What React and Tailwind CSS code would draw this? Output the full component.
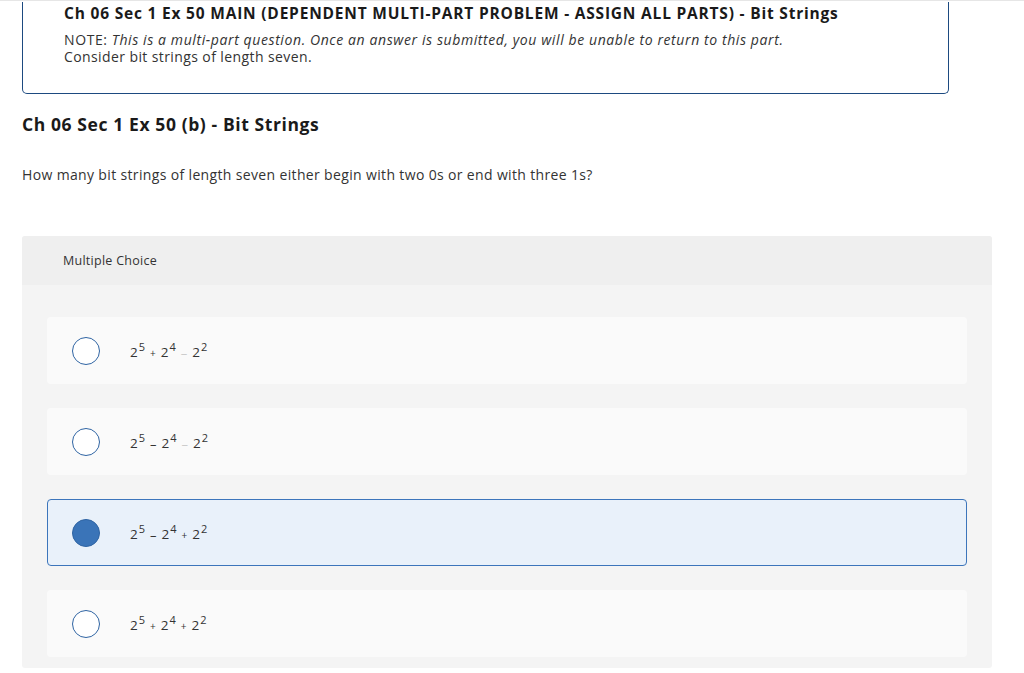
import React from "react";

const font = { fontFamily: "'Open Sans', Arial, sans-serif" };

function Term({ base = "2", exp }) {
  return (
    <span>
      {base}
      <sup className="text-[11px] top-[-6px] ml-[1px]">{exp}</sup>
    </span>
  );
}

function Op({ children, faint }) {
  const dash = children === "–";
  return (
    <span
      className={`mx-[5px] ${dash ? "text-[13px] relative top-[1px]" : "text-[10px]"} ${
        faint ? "text-[#cccccc]" : "text-[#333]"
      }`}
    >
      {children}
    </span>
  );
}

const options = [
  { parts: [["5"], ["+", false], ["4"], ["–", true], ["2"]], selected: false },
  { parts: [["5"], ["–", false], ["4"], ["–", true], ["2"]], selected: false },
  { parts: [["5"], ["–", false], ["4"], ["+", false], ["2"]], selected: true },
  { parts: [["5"], ["+", false], ["4"], ["+", false], ["2"]], selected: false },
];

function Option({ opt }) {
  return (
    <div
      className={`h-[67px] rounded-[4px] flex items-center pl-[24px] ${
        opt.selected ? "bg-[#e9f1fa] border border-[#3c75bb]" : "bg-[#fafafa] border border-transparent"
      }`}
    >
      <div
        className={`w-[28px] h-[28px] rounded-full border border-[#2f64a3] ${
          opt.selected ? "bg-[#3a74b8]" : "bg-white"
        }`}
      />
      <div className="ml-[30px] text-[13.5px] text-[#333] mt-[3px]">
        {opt.parts.map((p, i) =>
          i % 2 === 0 ? <Term key={i} exp={p[0]} /> : <Op key={i} faint={p[1]}>{p[0]}</Op>
        )}
      </div>
    </div>
  );
}

export default function App() {
  return (
    <div className="w-[1024px] h-[673px] overflow-hidden bg-white text-[#333]" style={font}>
      <div className="border-t border-[#e6e6e6] pt-px">
        <div className="ml-[22px] w-[927px] h-[92px] border border-t-0 border-[#1d4a80] rounded-b-[5px] pl-[41px] pt-[1px]">
          <div className="text-[15.5px] font-bold leading-[20px] tracking-[0.8px] text-[#1a1a1a] whitespace-nowrap">
            Ch 06 Sec 1 Ex 50 MAIN (DEPENDENT MULTI-PART PROBLEM - ASSIGN ALL PARTS) - Bit Strings
          </div>
          <div className="mt-[8px] text-[14px] leading-[17px] tracking-[0.6px] text-[#333]">
            NOTE: <i>This is a multi-part question. Once an answer is submitted, you will be unable to return to this part.</i>
            <br />
            <span className="tracking-[0.4px]">Consider bit strings of length seven.</span>
          </div>
        </div>
      </div>
      <div className="px-[22px]">
        <h2 className="mt-[19px] text-[17.5px] font-bold leading-[22px] tracking-[0.6px] text-[#1a1a1a]">
          Ch 06 Sec 1 Ex 50 (b) - Bit Strings
        </h2>
        <p className="mt-[31px] text-[14px] leading-[18px] tracking-[0.35px] text-[#333]">
          How many bit strings of length seven either begin with two 0s or end with three 1s?
        </p>
        <div className="mt-[52px] w-[970px] bg-[#f4f4f4] rounded-[3px]">
          <div className="h-[49px] bg-[#efefef] flex items-center pl-[41px] pt-[2px] text-[12.5px] tracking-[0.27px] text-[#333] rounded-t-[3px]">
            Multiple Choice
          </div>
          <div className="pt-[32px] pb-[11px] px-[25px] flex flex-col gap-[24px]">
            {options.map((o, i) => (
              <Option key={i} opt={o} />
            ))}
          </div>
        </div>
      </div>
    </div>
  );
}
